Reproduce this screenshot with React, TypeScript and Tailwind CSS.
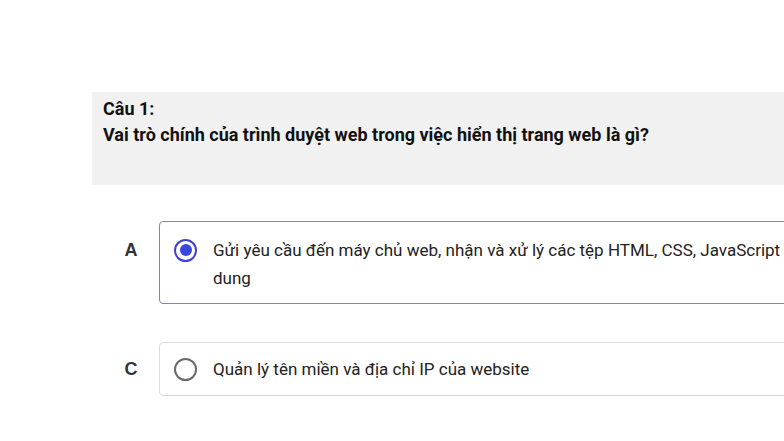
import React from 'react';

interface Option {
  label: string;
  text: string;
  selected?: boolean;
}

const options: Option[] = [
  {
    label: 'A',
    text: 'Gửi yêu cầu đến máy chủ web, nhận và xử lý các tệp HTML, CSS, JavaScript để hiển thị nội dung',
    selected: true,
  },
  { label: 'C', text: 'Quản lý tên miền và địa chỉ IP của website' },
];

const Radio = ({ checked }: { checked?: boolean }) =>
  checked ? (
    <span className="flex h-[23px] w-[23px] shrink-0 items-center justify-center rounded-full border-2 border-[#3d3fd8]">
      <span className="h-[12px] w-[12px] rounded-full bg-[#3a46e4]" />
    </span>
  ) : (
    <span className="h-[23px] w-[23px] shrink-0 rounded-full border-2 border-[#6a6a6a]" />
  );

export default function App() {
  return (
    <div className="h-[441px] w-[784px] overflow-hidden bg-white" style={{ fontFamily: 'Roboto, "Noto Sans", sans-serif' }}>
      <div className="ml-[92px] w-[830px] pt-[92px]">
        <div className="h-[93px] bg-[#f1f1f1] px-[11px] pt-[4px] text-[#111]">
          <div className="text-[18px] font-bold leading-[26px]">Câu 1:</div>
          <div className="text-[18px] font-bold leading-[26px]">
            Vai trò chính của trình duyệt web trong việc hiển thị trang web là gì?
          </div>
        </div>

        {options.map(({ label, text, selected }, index) => (
          <div key={index} className={`flex items-start pl-[11px] ${index === 0 ? 'mt-[36px]' : 'mt-[38px]'}`}>
            <div
              className="flex h-[28px] w-[56px] shrink-0 items-center justify-center text-[18px] font-bold text-[#333]"
              style={{ fontFamily: '"Liberation Sans", Arial, sans-serif', marginTop: selected ? 15 : 13 }}
            >
              {label}
            </div>
            <div
              className={`flex flex-1 items-start gap-[16px] rounded-[4px] border bg-white pl-[14px] pr-[14px] ${
                selected ? 'border-[#7f81d4] pt-[14px] pb-[11px]' : 'border-[#dcdcdc] py-[12px]'
              }`}
            >
              <div className="flex h-[28px] items-center">
                <Radio checked={selected} />
              </div>
              <div className="text-[17px] leading-[28px] text-[#222]">{text}</div>
            </div>
          </div>
        ))}
      </div>
    </div>
  );
}
